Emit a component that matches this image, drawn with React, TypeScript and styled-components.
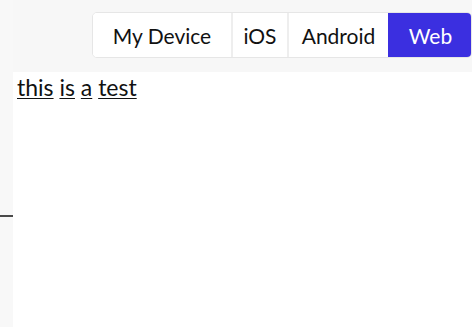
import React from "react";
import styled, { createGlobalStyle } from "styled-components";

const Global = createGlobalStyle`
  html, body { margin: 0; padding: 0; background: #ffffff; }
  body { font-family: "Source Sans Pro", Lato, "Noto Sans", sans-serif; }
`;

const Page = styled.div`
  display: flex;
  width: 474px;
  height: 327px;
  overflow: hidden;
`;

const Rail = styled.div`
  position: relative;
  width: 13px;
  flex: none;
  background: #f8f8f8;
`;

const RailMark = styled.div`
  position: absolute;
  left: 0;
  top: 215px;
  width: 13px;
  height: 2px;
  background: #4a4a4a;
`;

const Main = styled.div`
  flex: none;
  width: 459px;
  display: flex;
  flex-direction: column;
`;

const Toolbar = styled.div`
  height: 72px;
  box-sizing: border-box;
  padding-top: 12px;
  background: #f7f7f7;
  display: flex;
  justify-content: flex-end;
  align-items: flex-start;
`;

const Group = styled.div`
  display: flex;
  height: 46px;
  border: 1px solid #e6e6e6;
  border-radius: 5px;
  background: #ffffff;
  overflow: hidden;
  box-sizing: border-box;
`;

const Seg = styled.button<{ $w: number; $active?: boolean }>`
  width: ${(p) => p.$w}px;
  height: 100%;
  border: none;
  border-left: 2px solid ${(p) => (p.$active ? "#3b2fe0" : "#eeeeee")};
  &:first-child { border-left: none; }
  background: ${(p) => (p.$active ? "#3b2fe0" : "#ffffff")};
  color: ${(p) => (p.$active ? "#ffffff" : "#111111")};
  font-family: "Source Sans Pro", Lato, "Noto Sans", sans-serif;
  font-size: 21px;
  padding: 0;
  display: flex;
  align-items: center;
  justify-content: center;
  cursor: pointer;
`;

const Content = styled.div`
  padding: 0 4px;
  font-size: 23px;
  line-height: 30px;
  color: #111111;
`;

const Link = styled.a`
  color: #111111;
  text-decoration: underline;
  text-underline-offset: 2px;
  text-decoration-thickness: 1px;
`;

export default function App() {
  return (
    <>
      <Global />
      <Page>
        <Rail>
          <RailMark />
        </Rail>
        <Main>
          <Toolbar>
            <Group>
              <Seg $w={138}>My Device</Seg>
              <Seg $w={56}>iOS</Seg>
              <Seg $w={101}>Android</Seg>
              <Seg $w={83} $active>
                Web
              </Seg>
            </Group>
          </Toolbar>
          <Content>
            <Link href="#">this</Link> <Link href="#">is</Link>{" "}
            <Link href="#">a</Link> <Link href="#">test</Link>
          </Content>
        </Main>
      </Page>
    </>
  );
}
